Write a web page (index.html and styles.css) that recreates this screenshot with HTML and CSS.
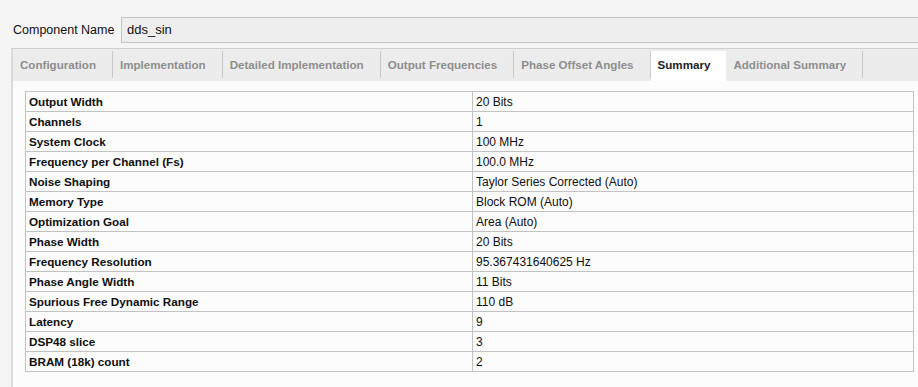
FILE: index.html
```html
<!DOCTYPE html>
<html>
<head>
<meta charset="utf-8">
<link rel="stylesheet" href="styles.css">
</head>
<body>
<div class="header">
  <label class="name-label">Component Name</label>
  <div class="name-input">dds_sin</div>
</div>
<div class="panel">
  <div class="tabs">
    <div class="tab">Configuration</div>
    <div class="tab">Implementation</div>
    <div class="tab">Detailed Implementation</div>
    <div class="tab">Output Frequencies</div>
    <div class="tab">Phase Offset Angles</div>
    <div class="tab active">Summary</div>
    <div class="tab">Additional Summary</div>
  </div>
  <div class="content">
    <table class="summary">
      <colgroup><col class="c1"><col></colgroup>
      <tr><th>Output Width</th><td>20 Bits</td></tr>
      <tr><th>Channels</th><td>1</td></tr>
      <tr><th>System Clock</th><td>100 MHz</td></tr>
      <tr><th>Frequency per Channel (Fs)</th><td>100.0 MHz</td></tr>
      <tr><th>Noise Shaping</th><td>Taylor Series Corrected (Auto)</td></tr>
      <tr><th>Memory Type</th><td>Block ROM (Auto)</td></tr>
      <tr><th>Optimization Goal</th><td>Area (Auto)</td></tr>
      <tr><th>Phase Width</th><td>20 Bits</td></tr>
      <tr><th>Frequency Resolution</th><td>95.367431640625 Hz</td></tr>
      <tr><th>Phase Angle Width</th><td>11 Bits</td></tr>
      <tr><th>Spurious Free Dynamic Range</th><td>110 dB</td></tr>
      <tr><th>Latency</th><td>9</td></tr>
      <tr><th>DSP48 slice</th><td>3</td></tr>
      <tr><th>BRAM (18k) count</th><td>2</td></tr>
    </table>
  </div>
</div>
</body>
</html>
```

FILE: styles.css
```css
html, body {
  margin: 0;
  padding: 0;
  background: #f5f5f5;
  font-family: "Liberation Sans", Arial, sans-serif;
  color: #111;
  overflow: hidden;
}
.header {
  display: flex;
  align-items: center;
  margin-top: 17px;
  height: 26px;
}
.name-label {
  flex: 0 0 121px;
  width: 121px;
  padding-left: 13px;
  box-sizing: border-box;
  font-size: 12.5px;
  color: #111;
  white-space: nowrap;
}
.name-input {
  flex: 1;
  height: 26px;
  box-sizing: border-box;
  border-top: 1px solid #c4c4c4;
  border-bottom: 1px solid #c4c4c4;
  border-left: 1px solid #c4c4c4;
  background: #eeeeee;
  font-size: 13px;
  line-height: 24px;
  padding-left: 5px;
  margin-right: -20px;
}
.panel {
  margin-top: 5px;
  margin-left: 11px;
  border-top: 1px solid #cfcfcf;
  border-left: 2px solid #dadada;
  margin-right: -20px;
}
.tabs {
  display: flex;
  align-items: flex-start;
  height: 32px;
  padding-top: 2px;
  box-sizing: border-box;
  background: #ececec;
}
.tab {
  height: 27px;
  line-height: 27px;
  padding: 0 16px 0 7px;
  border-right: 1px solid #c9c9c9;
  font-size: 11.6px;
  font-weight: bold;
  color: #8e8e8e;
  white-space: nowrap;
}
.tab.active {
  height: 30px;
  line-height: 27px;
  background: #ffffff;
  color: #1b1b2b;
  border-right: none;
}
.content {
  background: #fcfcfc;
  padding: 10px 0 30px 12px;
}
.summary {
  border-collapse: collapse;
  table-layout: fixed;
  width: 889px;
  font-size: 12px;
}
.summary col.c1 {
  width: 447px;
}
.summary th,
.summary td {
  border: 1px solid #c2c2c2;
  height: 19px;
  padding: 0 0 0 3px;
  text-align: left;
  white-space: nowrap;
  background: #fcfcfc;
  color: #0f0f0f;
}
.summary th {
  font-weight: bold;
  font-size: 11.7px;
}
```
